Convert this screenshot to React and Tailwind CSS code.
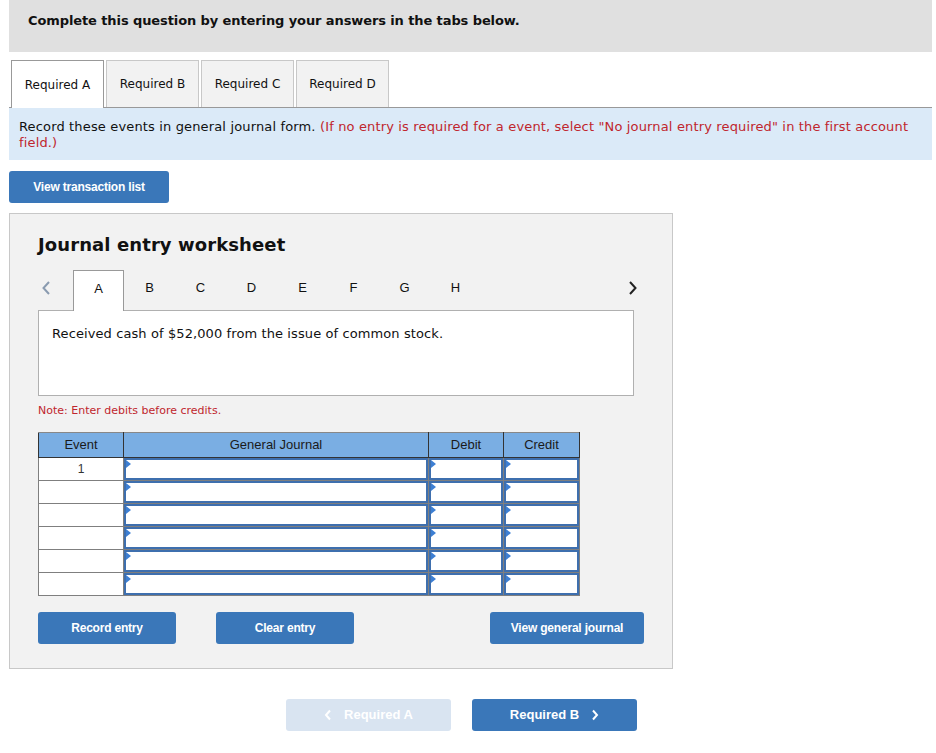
import React from "react";

const blueBtn =
  "flex items-center justify-center rounded-[3px] bg-[#3a77b9] text-white font-bold font-['Liberation_Sans',Arial,sans-serif] tracking-[-0.2px]";

function Tri() {
  return (
    <span className="absolute left-0 top-0 h-0 w-0 border-y-[4px] border-y-transparent border-l-[5px] border-l-[#3d7fd3]" />
  );
}

function InputCell() {
  return (
    <td className="border border-[#7f7f7f] p-0">
      <div className="relative h-[22px] border-2 border-[#3e6fae] bg-white">
        <Tri />
      </div>
    </td>
  );
}

export default function App() {
  const letters = ["A", "B", "C", "D", "E", "F", "G", "H"];
  const rows = ["1", "", "", "", "", ""];
  return (
    <div className="w-[936px] min-h-[753px] bg-white font-['DejaVu_Sans',Verdana,sans-serif] text-[#111]">
      {/* banner */}
      <div className="ml-[9px] mr-[4px] h-[52px] bg-[#e0e0e0] pl-[19px] pt-[12px] text-[13px] font-bold leading-[18px] tracking-[-0.1px]">
        Complete this question by entering your answers in the tabs below.
      </div>

      {/* tabs */}
      <div className="ml-[9px] mr-[4px] mt-[8px] flex h-[48px] gap-[2px] border-b border-[#999] pl-[2px]">
        {["Required A", "Required B", "Required C", "Required D"].map((t, i) => (
          <div
            key={t}
            className={
              i === 0
                ? "relative -mb-px flex h-[48px] w-[93px] items-center justify-center border border-b-0 border-[#999] bg-white text-[12px]"
                : "flex h-[47px] w-[93px] items-center justify-center border border-b-0 border-[#c8c8c8] bg-[#f2f2f2] text-[12px]"
            }
          >
            {t}
          </div>
        ))}
      </div>

      {/* info bar */}
      <div className="ml-[9px] mr-[4px] h-[52px] bg-[#dbeaf8] px-[10px] pt-[11px] text-[13px] leading-[16px] tracking-[0.15px]">
        Record these events in general journal form.{" "}
        <span className="text-[#c0262d]">
          (If no entry is required for a event, select "No journal entry required" in the first account field.)
        </span>
      </div>

      <div className="ml-[9px] mt-[11px]">
        <button className={`${blueBtn} h-[32px] w-[160px] text-[12px]`}>View transaction list</button>
      </div>

      {/* worksheet panel */}
      <div className="ml-[9px] mt-[10px] w-[664px] border border-[#c8c8c8] bg-[#f2f2f2] pb-[24px] pl-[28px] pt-[20px]">
        <div className="text-[18px] font-bold leading-[22px] tracking-[0.1px]">Journal entry worksheet</div>

        {/* letter tabs */}
        <div className="mt-[14px] flex h-[40px] w-[605px] items-stretch font-['Liberation_Sans',Arial,sans-serif] text-[13px]">
          <div className="flex w-[35px] items-center justify-start pb-[5px] pl-[3px]">
            <svg width="10" height="16" viewBox="0 0 10 16">
              <path d="M8 2 L2.5 8 L8 14" fill="none" stroke="#8a9bb0" strokeWidth="2" />
            </svg>
          </div>
          {letters.map((l, i) => (
            <div
              key={l}
              className={
                i === 0
                  ? "relative z-10 -mb-px flex h-[41px] w-[51px] items-center justify-center border border-b-0 border-[#999] bg-white pb-[5px]"
                  : "flex w-[51px] items-center justify-center pb-[5px]"
              }
            >
              {l}
            </div>
          ))}
          <div className="flex-1" />
          <div className="flex w-[24px] items-center justify-center pb-[5px] pl-[4px]">
            <svg width="10" height="16" viewBox="0 0 10 16">
              <path d="M2 2 L7.5 8 L2 14" fill="none" stroke="#222" strokeWidth="2" />
            </svg>
          </div>
        </div>

        <div className="h-[86px] w-[596px] border border-[#b0b0b0] bg-white pl-[13px] pt-[14px] text-[13px] leading-[18px] tracking-[0.1px]">
          Received cash of $52,000 from the issue of common stock.
        </div>

        <div className="mt-[7px] text-[11px] leading-[16px] text-[#c0262d]">Note: Enter debits before credits.</div>

        <table className="mt-[13px] w-[541px] table-fixed border-collapse font-['Liberation_Sans',Arial,sans-serif]">
          <colgroup>
            <col className="w-[85px]" />
            <col className="w-[305px]" />
            <col className="w-[75px]" />
            <col className="w-[76px]" />
          </colgroup>
          <thead>
            <tr className="h-[25px] bg-[#7aaee3]">
              {["Event", "General Journal", "Debit", "Credit"].map((h) => (
                <th
                  key={h}
                  className="border border-[#333] border-t-[#888] p-0 text-center text-[13px] font-normal text-[#1a1a1a]"
                >
                  {h}
                </th>
              ))}
            </tr>
          </thead>
          <tbody>
            {rows.map((r, i) => (
              <tr key={i} className="h-[23px]">
                <td className="border border-[#7f7f7f] bg-white p-0 text-center text-[12px] text-[#333]">{r}</td>
                <InputCell />
                <InputCell />
                <InputCell />
              </tr>
            ))}
          </tbody>
        </table>

        <div className="mt-[16px] flex w-[606px] items-center">
          <button className={`${blueBtn} h-[32px] w-[138px] text-[12px]`}>Record entry</button>
          <button className={`${blueBtn} ml-[40px] h-[32px] w-[138px] text-[12px]`}>Clear entry</button>
          <div className="flex-1" />
          <button className={`${blueBtn} h-[32px] w-[154px] text-[12px]`}>View general journal</button>
        </div>
      </div>

      {/* bottom nav */}
      <div className="mt-[30px] flex gap-[21px] pl-[286px]">
        <button className="flex h-[32px] w-[165px] items-center justify-center gap-[12px] rounded-[3px] bg-[#d9e4f1] font-['Liberation_Sans',Arial,sans-serif] text-[13px] font-bold text-white">
          <svg width="8" height="12" viewBox="0 0 8 12">
            <path d="M6 1.5 L2 6 L6 10.5" fill="none" stroke="#fff" strokeWidth="2" />
          </svg>
          Required A
        </button>
        <button className="flex h-[32px] w-[165px] items-center justify-center gap-[12px] rounded-[3px] bg-[#3a77b9] font-['Liberation_Sans',Arial,sans-serif] text-[13px] font-bold text-white">
          Required B
          <svg width="8" height="12" viewBox="0 0 8 12">
            <path d="M2 1.5 L6 6 L2 10.5" fill="none" stroke="#fff" strokeWidth="2" />
          </svg>
        </button>
      </div>
    </div>
  );
}
